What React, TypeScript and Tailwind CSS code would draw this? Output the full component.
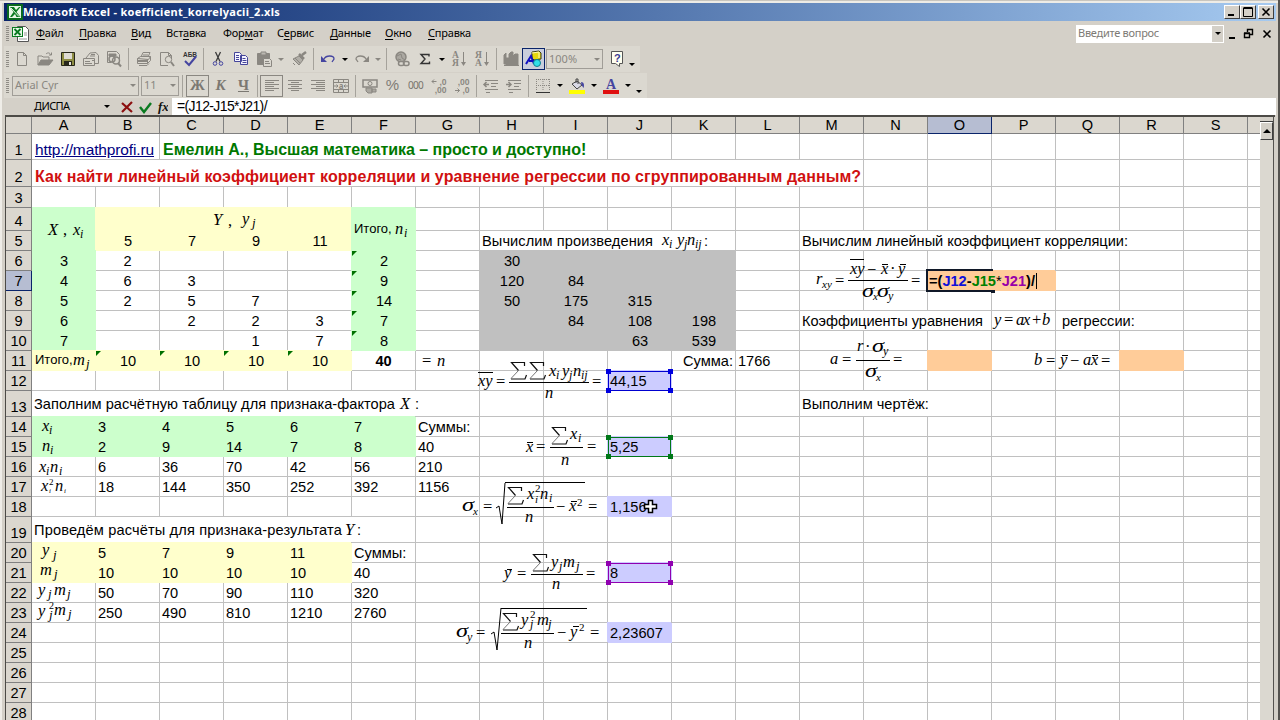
import type { ReactNode } from 'react'
import clsx from 'clsx'

const COLS = 'ABCDEFGHIJKLMNOPQRS'.split('')
const HEIGHTS = [26, 27, 21, 23, 20, 20, 20, 20, 20, 20, 20, 20, 26, 20, 20, 20, 20, 20, 26, 20, 20, 20, 20, 20, 20, 20, 20, 20]

type Cell = { c: string; t: string; span?: number; cls?: string; mark?: boolean }

// Shadow paints over the gridlines above and to the left of a filled cell
const FILLS = {
  green: 'bg-[#ccffcc] shadow-[-1px_-1px_0_#ccffcc]',
  yellow: 'bg-[#ffffcc] shadow-[-1px_-1px_0_#ffffcc]',
  gray: 'bg-[#c0c0c0] shadow-[-1px_-1px_0_#c0c0c0]',
  lilac: 'bg-[#ccccff] shadow-[-1px_-1px_0_#ccccff]',
  peach: 'bg-[#ffcc99] shadow-[-1px_-1px_0_#ffcc99]',
}

const REGIONS: [string, number, string, number, keyof typeof FILLS][] = [
  ['A', 4, 'A', 10, 'green'],
  ['B', 4, 'E', 5, 'yellow'],
  ['F', 4, 'F', 10, 'green'],
  ['A', 11, 'E', 11, 'yellow'],
  ['A', 14, 'F', 15, 'green'],
  ['A', 20, 'E', 21, 'yellow'],
  ['H', 6, 'K', 10, 'gray'],
  ['J', 12, 'J', 12, 'lilac'],
  ['J', 15, 'J', 15, 'lilac'],
  ['J', 18, 'J', 18, 'lilac'],
  ['J', 21, 'J', 21, 'lilac'],
  ['J', 24, 'J', 24, 'lilac'],
  ['O', 7, 'P', 7, 'peach'],
  ['O', 11, 'O', 11, 'peach'],
  ['R', 11, 'R', 11, 'peach'],
]

function fillOf(col: string, row: number) {
  const hit = REGIONS.find(([c1, r1, c2, r2]) => col >= c1 && col <= c2 && row >= r1 && row <= r2)
  return hit ? FILLS[hit[4]] : null
}

const mid = (start: string, values: string, mark = false): Cell[] =>
  values.split(' ').map((t, i) => ({ c: COLS[COLS.indexOf(start) + i], t: t === '_' ? '' : t, cls: 'justify-center', mark }))

const left = (start: string, values: string): Cell[] =>
  values.split(' ').map((t, i) => ({ c: COLS[COLS.indexOf(start) + i], t }))

const DATA: Record<number, Cell[]> = {
  1: [
    { c: 'A', t: 'http://mathprofi.ru', span: 2, cls: 'text-[#000080] underline pt-[6px] pl-[3px] text-[15.5px] tracking-[-0.13px]' },
    { c: 'C', t: 'Емелин А., Высшая математика – просто и доступно!', span: 7, cls: 'font-bold text-[#007800] pt-[6px] pl-[3px] text-[16px] tracking-[-0.03px]' },
  ],
  2: [
    { c: 'A', t: 'Как найти линейный коэффициент корреляции и уравнение регрессии по сгруппированным данным?', span: 13, cls: 'font-bold text-[#d01010] pt-[7px] pl-[3px] text-[16px] tracking-[0.085px]' },
  ],
  5: [
    ...mid('B', '5 7 9 11'),
    { c: 'H', t: 'Вычислим произведения', span: 4, cls: 'tracking-[0.09px]' },
    { c: 'M', t: 'Вычислим линейный коэффициент корреляции:', span: 6, cls: 'tracking-[-0.03px]' },
  ],
  6: [...mid('A', '3 2'), ...mid('F', '2', true), ...mid('H', '30')],
  7: [...mid('A', '4 6 3'), ...mid('F', '9', true), ...mid('H', '120 84')],
  8: [...mid('A', '5 2 5 7'), ...mid('F', '14', true), ...mid('H', '50 175 315')],
  9: [
    ...mid('A', '6 _ 2 2 3'),
    ...mid('F', '7', true),
    ...mid('I', '84 108 198'),
    { c: 'M', t: 'Коэффициенты уравнения', span: 3, cls: 'tracking-[-0.03px]' },
    { c: 'Q', t: 'регрессии:', span: 2, cls: 'pl-[6px]' },
  ],
  10: [...mid('A', '7 _ _ 1 7'), ...mid('F', '8', true), ...mid('J', '63 539')],
  11: [
    ...mid('B', '10 10 10 10', true),
    { c: 'F', t: '40', cls: 'justify-center font-bold' },
    { c: 'K', t: 'Сумма:', cls: 'justify-end pr-[2px]' },
    { c: 'L', t: '1766' },
  ],
  12: left('J', '44,15'),
  13: [
    { c: 'A', t: 'Заполним расчётную таблицу для признака-фактора', span: 7, cls: 'tracking-[0.03px]' },
    { c: 'M', t: 'Выполним чертёж:', span: 3 },
  ],
  14: left('B', '3 4 5 6 7 Суммы:'),
  15: [...left('B', '2 9 14 7 8 40'), ...left('J', '5,25')],
  16: left('B', '6 36 70 42 56 210'),
  17: left('B', '18 144 350 252 392 1156'),
  18: left('J', '1,156'),
  19: [{ c: 'A', t: 'Проведём расчёты для признака-результата', span: 6, cls: 'tracking-[0.145px]' }],
  20: left('B', '5 7 9 11 Суммы:'),
  21: [...left('B', '10 10 10 10 40'), ...left('J', '8')],
  22: left('B', '50 70 90 110 320'),
  23: left('B', '250 490 810 1210 2760'),
  24: left('J', '2,23607'),
}

function SheetRow({ row, height }: { row: number; height: number }) {
  const cells: ReactNode[] = []
  for (let i = 0; i < COLS.length; ) {
    const col = COLS[i]
    const data = DATA[row]?.find((d) => d.c === col)
    const span = data?.span ?? 1
    const fill = fillOf(col, row)
    cells.push(
      <div
        key={col}
        style={{ width: span * 64 }}
        className={clsx(
          'relative flex shrink-0 items-center whitespace-nowrap leading-none',
          fill ?? 'border-r border-b border-[#c0c0c0]',
          row > 2 && (fill ? 'pt-px' : 'pt-[2px]'),
          !data?.cls?.includes('justify-center') && 'pl-[2px]',
          data?.cls,
        )}
      >
        {data?.mark && <span className="absolute top-0 left-0 border-t-[5px] border-r-[5px] border-t-[#007000] border-r-transparent" />}
        <span>{data?.t}</span>
      </div>,
    )
    i += span
  }
  return (
    <div style={{ height }} className="flex">
      <div
        className={clsx(
          'relative z-10 flex w-[26px] shrink-0 items-end justify-center border-r border-b leading-[17px]',
          row === 7 ? 'border-[#0a246a] bg-[#b6bdd2]' : 'border-[#808080] bg-[#dbd7cf]',
        )}
      >
        {row}
      </div>
      {cells}
      <div className="w-3 shrink-0 border-b border-[#c0c0c0]" />
    </div>
  )
}

// Equation objects float over the grid; coordinates are window pixels
type Glyph = [number, number, string, number?]
type Line = [number, number, number]

function Sigma({ x, y }: { x: number; y: number }) {
  return (
    <>
      <path d={`M${x + 14.5} ${y + 5}v-3.500h-13l7 8`} fill="none" stroke="#111" strokeWidth="1.200" />
      <path d={`M${x + 8.5} ${y + 9.5}l-7.500 8`} fill="none" stroke="#777" />
      <path d={`M${x + 1} ${y + 18}h14l1.500-4`} fill="none" stroke="#111" strokeWidth="1.200" />
    </>
  )
}

function Equation({ glyphs, lines = [], sigmas = [], root }: { glyphs: Glyph[]; lines?: Line[]; sigmas?: [number, number][]; root?: string }) {
  const xs = glyphs.map((g) => g[0])
  const ys = glyphs.map((g) => g[1])
  const x0 = Math.min(...xs, ...lines.map((l) => l[0])) - 6
  const y0 = Math.min(...ys) - 22
  const w = Math.max(...xs, ...lines.map((l) => l[1])) + 24 - x0
  const h = Math.max(...ys) + 10 - y0
  return (
    <svg
      className="pointer-events-none absolute font-['Liberation_Serif',serif]"
      style={{ left: x0 - 6, top: y0 - 117 }}
      width={w}
      height={h}
      viewBox={`${x0} ${y0} ${w} ${h}`}
    >
      {sigmas.map(([x, y]) => (
        <Sigma key={x} x={x} y={y} />
      ))}
      {lines.map(([a, b, y]) => (
        <path key={`${a}-${y}`} d={`M${a} ${y + 0.5}H${b}`} stroke="#000" shapeRendering="crispEdges" />
      ))}
      {root && <path d={root} fill="none" stroke="#000" />}
      {glyphs.map(([x, y, t, size]) => (
        <text
          key={`${x}-${y}`}
          x={x}
          y={y}
          fontSize={size ?? 16.5}
          fontStyle={/[=−+·\d,:]/.test(t) ? 'normal' : 'italic'}
          textLength={t === 'σ' ? 12 : undefined}
          lengthAdjust="spacingAndGlyphs"
        >
          {t}
        </text>
      ))}
    </svg>
  )
}

function Equations() {
  return (
    <>
      <Equation glyphs={[[48, 235, 'X'], [63, 235, ','], [73, 235, 'x'], [80, 238, 'i', 12]]} />
      <Equation glyphs={[[213, 225, 'Y'], [228, 226, ','], [242, 224, 'y'], [252, 227, 'j', 13]]} />
      <Equation glyphs={[[395, 234, 'n'], [404, 237, 'i', 12]]} />
      <Equation glyphs={[[73, 365, 'm'], [86, 368, 'j', 13]]} />
      <Equation glyphs={[[422, 366, '='], [437, 366, 'n']]} />
      <Equation glyphs={[[662, 245, 'x'], [669, 248, 'i', 12], [677, 245, 'y'], [684, 248, 'j', 12], [687, 245, 'n'], [695, 248, 'ij', 12]]} />
      <Equation
        glyphs={[
          [478, 386, 'xy'], [496, 387, '='], [549, 376, 'x'], [556, 379, 'i', 12], [562, 376, 'y'], [569, 379, 'j', 12],
          [573, 376, 'n'], [581, 379, 'ij', 12], [545, 398, 'n'], [592, 387, '='],
        ]}
        lines={[[478, 493, 372], [509, 589, 382]]}
        sigmas={[[510, 361], [529, 361]]}
      />
      <Equation
        glyphs={[[526, 452, 'x'], [536, 452, '='], [570, 439, 'x'], [578, 442, 'i', 12], [561, 465, 'n'], [587, 452, '=']]}
        lines={[[527, 533, 442], [550, 583, 447]]}
        sigmas={[[551, 426]]}
      />
      <Equation
        glyphs={[
          [462, 511, 'σ', 18], [473, 515, 'x', 11], [483, 512, '='], [527, 499, 'x'], [535, 492, '2', 11], [535, 503, 'i', 11],
          [540, 499, 'n'], [549, 502, 'i', 12], [525, 522, 'n'], [556, 512, '−'], [569, 511, 'x'], [577, 506, '2', 11], [588, 512, '='],
        ]}
        lines={[[507, 554, 507], [571, 577, 501], [505, 585, 482]]}
        sigmas={[[507, 486]]}
        root="M496 508l3-2 3 18 3-41"
      />
      <Equation
        glyphs={[
          [504, 578, 'y'], [517, 579, '='], [551, 567, 'y'], [559, 570, 'j', 12], [563, 567, 'm'], [576, 570, 'j', 13],
          [552, 589, 'n'], [586, 579, '='],
        ]}
        lines={[[507, 512, 569], [531, 583, 574]]}
        sigmas={[[532, 553]]}
      />
      <Equation
        glyphs={[
          [456, 637, 'σ', 18], [467, 641, 'y', 12], [476, 638, '='], [521, 625, 'y'], [530, 618, '2', 11], [530, 628, 'j', 12],
          [537, 625, 'm'], [548, 628, 'j', 13], [524, 648, 'n'], [557, 638, '−'], [570, 637, 'y'], [579, 631, '2', 11], [590, 638, '='],
        ]}
        lines={[[501, 554, 633], [573, 579, 626], [501, 587, 608]]}
        sigmas={[[502, 612]]}
        root="M491 634l3-2 3 18 4-42"
      />
      <Equation
        glyphs={[
          [816, 284, 'r'], [822, 288, 'xy', 11], [835, 286, '='], [850, 274, 'xy'], [867, 275, '−'], [881, 274, 'x'],
          [890, 274, '·'], [898, 274, 'y'], [862, 297, 'σ', 18], [873, 300, 'x', 11], [877, 297, 'σ', 18], [888, 300, 'y', 12], [911, 286, '='],
        ]}
        lines={[[850, 864, 259], [848, 908, 280], [882, 888, 264], [900, 906, 264]]}
      />
      <Equation
        glyphs={[
          [830, 364, 'a'], [842, 365, '='], [857, 351, 'r'], [865, 352, '·'], [872, 352, 'σ', 18], [883, 355, 'y', 12],
          [865, 377, 'σ', 18], [876, 381, 'x', 11], [893, 365, '='],
        ]}
        lines={[[856, 890, 360]]}
      />
      <Equation glyphs={[[994, 325, 'y'], [1004, 325, '='], [1016, 325, 'a'], [1023, 325, 'x'], [1032, 325, '+'], [1042, 325, 'b']]} />
      <Equation
        glyphs={[[1034, 365, 'b'], [1046, 366, '='], [1060, 365, 'y'], [1070, 366, '−'], [1083, 365, 'a'], [1091, 365, 'x'], [1101, 366, '=']]}
        lines={[[1062, 1068, 355], [1092, 1098, 355]]}
      />
      <Equation glyphs={[[400, 409, 'X'], [345, 535, 'Y']]} />
      <Equation glyphs={[[42, 431, 'x'], [49, 434, 'i', 12], [42, 451, 'n'], [50, 454, 'i', 12]]} />
      <Equation glyphs={[[39, 472, 'x'], [46, 475, 'i', 12], [50, 472, 'n'], [59, 475, 'i', 12]]} />
      <Equation glyphs={[[41, 491, 'x'], [49, 485, '2', 9], [55, 491, 'n'], [64, 493, 'i', 7], [49, 493, 'i', 7]]} />
      <Equation glyphs={[[42, 555, 'y'], [53, 559, 'j', 13], [40, 575, 'm'], [54, 578, 'j', 13]]} />
      <Equation glyphs={[[38, 595, 'y'], [48, 598, 'j', 13], [54, 595, 'm'], [67, 598, 'j', 13]]} />
      <Equation glyphs={[[38, 616, 'y'], [49, 609, '2', 10], [49, 619, 'j', 13], [54, 615, 'm'], [68, 618, 'j', 13]]} />
    </>
  )
}

function RefBox({ top, cls }: { top: number; cls: string }) {
  return (
    <div style={{ top }} className={clsx('absolute left-[602px] h-[20px] w-[63px] border', cls)}>
      <i className="absolute -top-[3px] -left-[3px] size-[5px] bg-current" />
      <i className="absolute -top-[3px] -right-[3px] size-[5px] bg-current" />
      <i className="absolute -bottom-[3px] -left-[3px] size-[5px] bg-current" />
      <i className="absolute -right-[3px] -bottom-[3px] size-[5px] bg-current" />
    </div>
  )
}

function Sheet() {
  return (
    <div className="relative h-[603px] w-[1254px] overflow-hidden bg-white font-['Liberation_Sans',sans-serif] text-[14.6px] text-black">
      <div className="flex h-[17px] leading-[17px]">
        <div className="w-[26px] shrink-0 border-r border-b border-[#808080] bg-[#dbd7cf]" />
        {COLS.map((c) => (
          <div
            key={c}
            className={clsx(
              'w-16 shrink-0 border-r border-b text-center',
              c === 'O' ? 'border-[#0a246a] bg-[#b6bdd2]' : 'border-[#808080] bg-[#dbd7cf]',
            )}
          >
            {c}
          </div>
        ))}
        <div className="w-3 shrink-0 border-b border-[#808080] bg-[#dbd7cf]" />
      </div>
      {HEIGHTS.map((h, i) => (
        <SheetRow key={i} row={i + 1} height={h} />
      ))}
      <span className="absolute top-[104px] left-[348px] text-[13px] leading-[16px]">Итого,</span>
      <span className="absolute top-[235px] left-[29px] text-[13px] leading-[16px]">Итого,</span>
      <span className="absolute top-[116px] left-[698px] leading-[16px]">:</span>
      <span className="absolute top-[279px] left-[409px] leading-[16px]">:</span>
      <span className="absolute top-[405px] left-[351px] leading-[16px]">:</span>
      <Equations />
      <RefBox top={254} cls="border-[#0000d0] text-[#0000e0]" />
      <RefBox top={320} cls="border-[#007818] text-[#007818]" />
      <RefBox top={446} cls="border-[#9000b0] text-[#9000b0]" />
      {/* cell being edited */}
      <div className="absolute top-[152px] left-[920px] h-[23px] w-[67px] border-2 border-r-0 border-[#101828]">
        <i className="absolute -right-[2px] -bottom-[3px] size-[4px] bg-[#101828]" />
      </div>
      <div className="absolute top-[154px] left-[922px] flex h-[19px] items-center bg-[#ffcc99] pt-px pl-px leading-none font-bold whitespace-nowrap">
        =(<span className="text-[#1010d8]">J12</span>-<span className="text-[#008000]">J15</span>
        <span className="font-normal">*</span>
        <span className="text-[#9800a8]">J21</span>)/
        <i className="ml-px h-[16px] w-px bg-black" />
      </div>
      <svg className="absolute top-[382px] left-[637px]" width="15" height="15" viewBox="0 0 15 15">
        <path d="M5.500 1.500h4v4h4v4h-4v4h-4v-4h-4v-4h4z" fill="#fff" stroke="#000" strokeWidth="1.500" />
      </svg>
    </div>
  )
}

const G = '#8a8781'

function Icon({ children, w = 16 }: { children: ReactNode; w?: number }) {
  return (
    <svg width={w} height="16" viewBox={`0 0 ${w} 16`} fill="none" stroke={G} className="shrink-0 overflow-visible">
      {children}
    </svg>
  )
}

function Btn({ children, boxed }: { children: ReactNode; boxed?: boolean }) {
  return <div className={clsx('flex h-[22px] w-[23px] shrink-0 items-center justify-center', boxed && 'border border-[#8a8781]')}>{children}</div>
}

function Sep({ cls }: { cls: string }) {
  return (
    <div className={clsx('flex h-[22px] shrink-0 justify-center', cls)}>
      <i className="w-px bg-[#a5a29b]" />
    </div>
  )
}

function Arrow({ off, cls = 'w-[11px]' }: { off?: boolean; cls?: string }) {
  return (
    <div className={clsx('flex shrink-0 items-center justify-center', cls)}>
      <i className={clsx('border-x-[3px] border-t-[3px] border-x-transparent', off ? 'border-t-[#8a8781]' : 'border-t-black')} />
    </div>
  )
}

function Handle() {
  return (
    <div className="flex h-[16px] w-[6px] shrink-0 flex-col justify-between pl-[2px]">
      {[0, 1, 2, 3, 4, 5, 6, 7].map((i) => (
        <i key={i} className="h-px w-[3px] bg-[#8f8c86]" />
      ))}
    </div>
  )
}

function XlsIcon() {
  return (
    <svg width="16" height="16" viewBox="0 0 16 16" className="shrink-0">
      <path d="M0 0h16v16H0z" fill="#0a6a1e" />
      <path d="M2 2h12v12H2z" fill="#e8f8e8" />
      <path d="M3 3h4l2 3 3-3h1.500L9.500 8l4 5h-4L8 10l-3 3H3l3.500-5z" fill="#0a7a20" />
      <path d="M4 4l8 8.500" stroke="#e8f8e8" />
    </svg>
  )
}

function Combo({ text, cls }: { text: string; cls: string }) {
  return (
    <div className={clsx('flex h-[20px] shrink-0 items-center justify-between border border-[#a09d97] pl-[2px] text-[#8a8781]', cls)}>
      <span>{text}</span>
      <Arrow off />
    </div>
  )
}

function SortIcon({ a, b }: { a: string; b: string }) {
  return (
    <Icon>
      <g fill={G} stroke="none" fontSize="9.500" fontWeight="700" className="font-['Liberation_Serif',serif]">
        <text x="1" y="7">{a}</text>
        <text x="1" y="15">{b}</text>
      </g>
      <path d="M12.500 1v11" />
      <path d="M10 11h5l-2.500 4z" fill={G} stroke="none" />
    </Icon>
  )
}

function StandardBar() {
  return (
    <div className="flex h-[26px] w-[636px] items-center bg-[#dbd8d0]">
      <Handle />
      <Btn><Icon><path d="M3.500 1.500h6l3 3v10h-9zM9.500 1.500v3h3" /></Icon></Btn>
      <Btn><Icon><path d="M1 14V5h4l1 1h6v3M9 3c2-2 4-1 5 1M12 4h2.500V1.500" /><path d="M1 14l3-5h12l-4 5z" fill={G} /></Icon></Btn>
      <Btn>
        <Icon>
          <path d="M1.500 1.500h13v13h-13z" fill="#8d8c42" stroke="#26261a" />
          <path d="M4 2h8v6H4z" fill="#dedbd3" stroke="none" />
          <path d="M4 10h8v4H4z" fill="#26261a" stroke="none" />
          <path d="M9 11h2v3H9z" fill="#e8e6e0" stroke="none" />
        </Icon>
      </Btn>
      <Btn><Icon><path d="M.5 7.500h11v7H.5zM3 7l4-5 6-.500 2.500 3v8h-4M2 10.500h5M2 12.500h7M9 9.500h2M7 5h5M8 3.500h4" /></Icon></Btn>
      <Btn><Icon><path d="M1.500.500h9l3 3v8M1.500.500v11h4" /><path d="M3 3h7v2H3z" fill={G} /><circle cx="6" cy="8" r="3" strokeWidth="1.500" /><circle cx="10" cy="9.500" r="3.500" strokeWidth="1.500" /><path d="M12 12l3 3.500" strokeWidth="2" /></Icon></Btn>
      <Sep cls="w-[7px]" />
      <Btn><Icon><path d="M5 6l2-4.500h7L12 6M7 4h5M1.500 7.500l3-2h10l-2 3zM1.500 7.500v5h10v-4M11.500 12.500l3-3v-4M3 14.500h8l2-2" /><path d="M2 10h9" strokeWidth="2" /></Icon></Btn>
      <Btn><Icon><path d="M9 14.500H1.500v-13h8l3 3V8M9.500 1.500v3h3" /><circle cx="9.500" cy="8.500" r="3.200" /><path d="M12 11l3 4" strokeWidth="2" /></Icon></Btn>
      <Btn>
        <Icon>
          <text x="1" y="6" fontSize="6.500" fontWeight="700" fill="#333" stroke="none" className="font-['Liberation_Sans',sans-serif]">АБВ</text>
          <path d="M3 10l4 4 7-8.500" stroke="#4545a0" strokeWidth="2" />
        </Icon>
      </Btn>
      <Sep cls="w-[5px]" />
      <Btn><Icon><path d="M5.500 1l4.500 9.500M10.500 1L6 10.500" stroke="#3a3a3a" strokeWidth="1.300" /><circle cx="5" cy="12.500" r="1.800" stroke="#4545a0" /><circle cx="11" cy="12.500" r="1.800" stroke="#4545a0" /></Icon></Btn>
      <Btn><Icon><path d="M1.500 1.500h5l2 2v7h-7zM8.500 4.500h4l2 2v7h-7v-9z" fill="#f4f3ff" stroke="#45459a" /><path d="M3 4.500h3M3 6.500h3M3 8.500h3M9.500 7.500h3M9.500 9.500h4M9.500 11.500h4" stroke="#45459a" /></Icon></Btn>
      <Btn><Icon><path d="M1.500 2.500h12v11h-12z" fill={G} /><path d="M5 1h5v3H5z" fill="#bbb8b1" /><path d="M7.500 7.500h6l2 2v6h-8z" fill="#dbd8d0" /><path d="M9 10.500h4M9 12.500h5" /></Icon></Btn>
      <Arrow off cls="w-[12px]" />
      <Btn><Icon><path d="M15 1l-4 3M8 3l5 5" strokeWidth="2.500" /><path d="M8 5l4 4-4 5-6-6z" fill="#b1aea7" /><path d="M2 8l5 5M4 7l5 5M2 12l2 2" /></Icon></Btn>
      <Sep cls="w-[6px]" />
      <Btn><Icon><path d="M4 8c2-4 10-4 10 0l-2 3" stroke="#4545a0" strokeWidth="1.300" /><path d="M1 5v6h6z" fill="#4545a0" stroke="none" /></Icon></Btn>
      <Arrow />
      <Btn><Icon><path d="M12 8C10 4 2 4 2 8l2 3" strokeWidth="1.300" /><path d="M15 5v6H9z" fill={G} stroke="none" /></Icon></Btn>
      <Arrow off cls="w-[10px]" />
      <Sep cls="w-[7px]" />
      <Btn><Icon><circle cx="7" cy="6" r="5" fill="#aba8a1" strokeWidth="1.500" /><path d="M3 5l4-2 1 4 3 2M4 8l3 1" /><rect x="4.500" y="10.500" width="5.500" height="4" rx="2" fill="#dbd8d0" strokeWidth="1.500" /><rect x="9.500" y="10.500" width="5.500" height="4" rx="2" strokeWidth="1.500" /></Icon></Btn>
      <Btn><Icon><path d="M12 5.500V3.500H4L8 8l-4 4.500h8.500V10.500" stroke="#333" strokeWidth="1.400" /></Icon></Btn>
      <Arrow />
      <Btn><SortIcon a="А" b="Я" /></Btn>
      <Btn><SortIcon a="Я" b="А" /></Btn>
      <Sep cls="w-[6px]" />
      <Btn><Icon><path d="M1 4l2-2v11H1zM3 14V7h3v7M6 14V3l2-2h2v13M10 14V5l2-2h3v11zM1 14.500h15" fill={G} /></Icon></Btn>
      <div className="flex h-[22px] w-[23px] shrink-0 items-center justify-center border border-[#0a246a] bg-[#c9cedc]">
        <Icon>
          <path d="M6 1l7-1 2 2v6l-7 1-2-2z" fill="#e6d810" stroke="#3a3a10" />
          <path d="M6 2l7-1v6" stroke="#fffbb0" />
          <path d="M0 13L5 5l3 8M3 10h5" stroke="#1010c0" strokeWidth="2" />
          <circle cx="11" cy="12" r="3.500" fill="#30e0e8" stroke="#108090" />
        </Icon>
      </div>
      <Combo text="100%" cls="ml-px w-[57px]" />
      <div className="w-[2px]" />
      <Btn><Icon><path d="M2.500.500h11v12h-3v3l-4-3h-4z" fill="#fffff0" stroke="#555" /><text x="5" y="10.500" fontSize="11" fontWeight="700" fill="#3a3a90" stroke="none" className="font-['Liberation_Sans',sans-serif]">?</text></Icon></Btn>
      <Arrow cls="w-[8px] pt-[10px]" />
    </div>
  )
}

function Lines({ rows }: { rows: [number, number][] }) {
  return (
    <Icon>
      {rows.map(([a, b], i) => (
        <path key={i} d={`M${a} ${i * 2 + 2.5}H${b}`} shapeRendering="crispEdges" />
      ))}
    </Icon>
  )
}

function DecimalIcon({ a, b, left }: { a: string; b: string; left?: boolean }) {
  return (
    <Icon>
      <g fill={G} stroke="none" fontSize="8.500" fontWeight="700" className="font-['Liberation_Sans',sans-serif]">
        <text x="15.500" y="7" textAnchor="end">{a}</text>
        <text x="15.500" y="15" textAnchor="end">{b}</text>
      </g>
      <path d={left ? 'M1 3.500h4.500M3 1.500l-2 2 2 2' : 'M1 12.500h4.500M3.500 10.500l2 2-2 2'} />
    </Icon>
  )
}

function IndentIcon({ d }: { d: string }) {
  return (
    <Icon>
      <path d="M2 2.500h13M8 5.500h7M8 8.500h5M2 11.500h13M3 14.500h4" />
      <path d={d} strokeWidth="1.500" />
    </Icon>
  )
}

function FormatBar() {
  return (
    <div className="flex h-[25px] w-[643px] items-center bg-[#dbd8d0]">
      <Handle />
      <Combo text="Arial Cyr" cls="ml-[2px] w-[127px]" />
      <Combo text="11" cls="ml-[2px] w-[38px]" />
      <Sep cls="w-[7px]" />
      <div className="flex font-['Liberation_Serif',serif] text-[15px] font-bold text-[#7b7872]">
        <Btn boxed>Ж</Btn>
        <Btn><i>К</i></Btn>
        <Btn><u>Ч</u></Btn>
      </div>
      <Sep cls="w-[5px]" />
      <Btn boxed><Lines rows={[[1, 15], [1, 10], [1, 15], [1, 10], [1, 15], [1, 10]]} /></Btn>
      <Btn><Lines rows={[[1, 15], [4, 12], [1, 15], [4, 12], [1, 15], [4, 12]]} /></Btn>
      <Btn><Lines rows={[[1, 15], [6, 15], [1, 15], [6, 15], [1, 15], [6, 15]]} /></Btn>
      <Btn><Icon><path d="M.5 1.500h15v13H.5zM.5 4.500h15M.5 11.500h15M5.500 1.500v3M10.500 1.500v3M5.500 11.500v3M10.500 11.500v3M1 8h4M11 8h4M3.500 6.500L5 8l-1.500 1.500M12.500 6.500L11 8l1.500 1.500" /><text x="5.800" y="10.500" fontSize="8" fontWeight="700" fill={G} stroke="none">a</text></Icon></Btn>
      <Sep cls="w-[6px]" />
      <Btn><Icon><path d="M1 2h14v7H1z" strokeWidth="1.500" /><circle cx="8" cy="5.500" r="2" /><path d="M4 10h6v5H6l-2-2zM10 11h4v3h-4z" fill="#aba8a1" /></Icon></Btn>
      <Btn><span className="font-['Liberation_Sans',sans-serif] text-[15px] text-[#7f7c76]">%</span></Btn>
      <Btn><span className="text-[10px] tracking-[-0.7px] text-[#77746e]">000</span></Btn>
      <Btn><DecimalIcon a=",0" b=",00" left /></Btn>
      <Btn><DecimalIcon a=",00" b=",0" /></Btn>
      <Sep cls="w-[6px]" />
      <Btn><IndentIcon d="M1 6.500h5M3.500 4L1 6.500 3.500 9" /></Btn>
      <Btn><IndentIcon d="M0 6.500h5M2.500 4L5 6.500 2.500 9" /></Btn>
      <Sep cls="w-[6px]" />
      <Btn><Icon><path d="M1.500 1v12M8 1v12M14.500 1v12M1 1.500h14M1 7.500h14" strokeDasharray="1 1" /><path d="M1 14.500h14" stroke="#333" /></Icon></Btn>
      <Arrow />
      <Btn>
        <Icon>
          <path d="M3 6l5-3 5 4-5 4z" fill="#d8d8e4" stroke="#444" />
          <path d="M7 5V1h2v5" stroke="#444" />
          <path d="M12 4c3 0 3.500 3 2.500 6l-2-3z" fill="#4545a0" stroke="none" />
          <path d="M0 12h16v4H0z" fill="#ffff00" stroke="none" />
        </Icon>
      </Btn>
      <Arrow />
      <Btn>
        <Icon>
          <text x="3" y="11" fontSize="14" fontWeight="700" fill="#4545a0" stroke="none" className="font-['Liberation_Serif',serif]">A</text>
          <path d="M0 12h16v4H0z" fill="#e01010" stroke="none" />
        </Icon>
      </Btn>
      <Arrow />
      <Arrow cls="w-[12px] pt-[12px]" />
    </div>
  )
}

const MENU: [string, string, string, string][] = [
  ['', 'Ф', 'айл', 'w-[43px]'],
  ['', 'П', 'равка', 'w-[52px]'],
  ['', 'В', 'ид', 'w-[35px]'],
  ['Вст', 'а', 'вка', 'w-[57px]'],
  ['Фор', 'м', 'ат', 'w-[54px]'],
  ['С', 'е', 'рвис', 'w-[53px]'],
  ['', 'Д', 'анные', 'w-[55px]'],
  ['', 'О', 'кно', 'w-[43px]'],
  ['', 'С', 'правка', 'w-[60px]'],
]

function WinButton({ children }: { children: ReactNode }) {
  return (
    <div className="flex h-[14px] w-[16px] shrink-0 items-center justify-center border border-t-white border-r-[#404040] border-b-[#404040] border-l-white bg-[#d4d0c8]">
      <svg width="10" height="10" viewBox="0 0 10 10" fill="none" stroke="#000">
        {children}
      </svg>
    </div>
  )
}

export default function App() {
  return (
    <div className="flex h-[720px] w-[1280px] flex-col overflow-hidden border-r-2 border-[#55534f] bg-[#d4d0c8] font-['Noto_Sans','DejaVu_Sans',sans-serif] text-[11px] text-black shadow-[inset_2px_0_0_#efede8]">
      <div className="h-[3px] shrink-0 border-t border-[#c8c5be] bg-[#eeece6]" />
      <div className="mr-[2px] ml-[4px] flex h-[18px] shrink-0 items-center bg-linear-to-r from-[#0a246a] to-[#a6caf0] pr-[2px] pl-[3px] text-white">
        <XlsIcon />
        <span className="grow font-bold tracking-[0.285px] whitespace-nowrap">Microsoft Excel - koefficient_korrelyacii_2.xls</span>
        <WinButton><path d="M1 8h6" strokeWidth="2" /></WinButton>
        <WinButton><path d="M.5 1h9" strokeWidth="2" /><path d="M.5 1v8.500h9V1" /></WinButton>
        <div className="w-[2px]" />
        <WinButton><path d="M1.500 1.500l7 7M8.500 1.500l-7 7" strokeWidth="1.600" /></WinButton>
      </div>

      <div className="ml-[4px] flex h-[25px] shrink-0 items-center">
        <Handle />
        <div className="flex w-[26px] pl-[2px]">
          <svg width="17" height="16" viewBox="0 0 17 16">
            <path d="M5.500.500h8l3 3v12h-11z" fill="#fff" stroke="#555" />
            <path d="M0 1h11v10H0z" fill="#0a7a20" />
            <path d="M1 2h9v8H1z" fill="#e8f8e8" />
            <path d="M2.500 3l6 6M8.500 3l-6 6" stroke="#0a7a20" strokeWidth="1.800" />
            <path d="M12 7h3M12 9h3M7 13h8" stroke="#999" />
          </svg>
        </div>
        {MENU.map(([pre, key, post, w]) => (
          <span key={key + post} className={clsx('shrink-0 tracking-[-0.22px]', w)}>
            {pre}
            <u className="underline-offset-2">{key}</u>
            {post}
          </span>
        ))}
        <div className="ml-auto flex h-[18px] w-[148px] shrink-0 items-center justify-between bg-white pl-[2px] tracking-[-0.27px] text-[#7d7a75]">
          Введите вопрос
          <div className="mr-px flex h-[16px] bg-[#d4d0c8]">
            <Arrow />
          </div>
        </div>
        <svg width="54" height="14" viewBox="0 0 54 14" fill="none" stroke="#000" className="shrink-0">
          <path d="M5 11h6" strokeWidth="2" />
          <path d="M20.500 6.500h5v4h-5zM23.500 5V2.500h5v5H26M23 2.500h6M20 6h6" strokeWidth="1.400" />
          <path d="M39.500 3.500l7 7M46.500 3.500l-7 7" strokeWidth="1.600" />
        </svg>
      </div>

      <div className="ml-[4px] h-[26px] shrink-0">
        <StandardBar />
      </div>
      <div className="mt-px ml-[4px] h-[25px] shrink-0">
        <FormatBar />
      </div>

      <div className="mr-[2px] ml-[4px] flex h-[17px] shrink-0 items-center">
        <span className="w-[96px] pl-[30px] tracking-[-0.6px]">ДИСПА</span>
        <Arrow cls="w-[14px]" />
        <svg width="54" height="16" viewBox="0 0 54 16" fill="none" className="shrink-0">
          <path d="M8 4l10 9M18 3L8 13" stroke="#8c1010" strokeWidth="2.200" />
          <path d="M26 8l4 5 7-9" stroke="#0a7a20" strokeWidth="2.400" />
          <text x="44" y="12" fontSize="13" fontWeight="700" fontStyle="italic" fill="#111" className="font-['Liberation_Serif',serif]">fx</text>
        </svg>
        <div className="ml-[4px] flex h-[17px] grow items-center bg-white pl-[5px] font-['Liberation_Sans',sans-serif] text-[14px] tracking-[-0.62px]">=(J12-J15*J21)/</div>
      </div>

      <div className="mr-[3px] ml-[5px] flex h-[605px] shrink-0 border-t-2 border-l border-[#4c4a46]">
        <Sheet />
        <div className="flex w-[14px] flex-col border-r border-[#55534f] bg-[#dbd8d0]">
          <div className="h-[5px] border-b border-[#404040] bg-[#d4d0c8]" />
          <div className="flex h-[18px] items-center justify-center border border-t-white border-r-[#404040] border-b-[#404040] border-l-white bg-[#d4d0c8]">
            <i className="border-x-[4px] border-b-[4px] border-x-transparent border-b-black" />
          </div>
        </div>
      </div>
    </div>
  )
}
